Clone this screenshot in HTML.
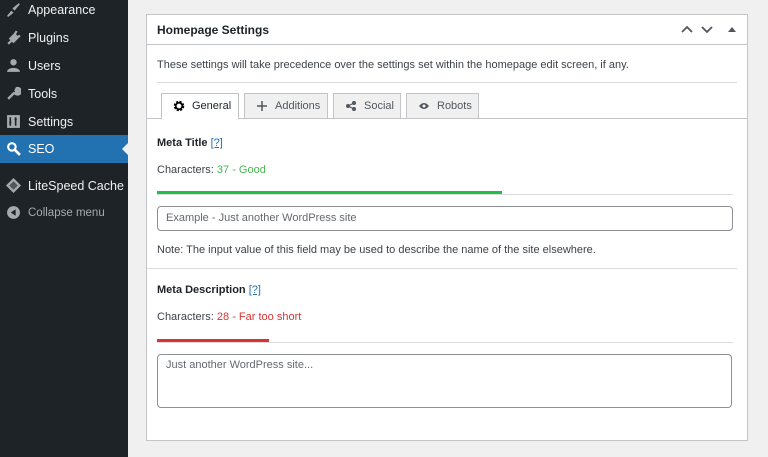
<!DOCTYPE html>
<html><head><style>
*{box-sizing:border-box;margin:0;padding:0}
body{width:768px;height:457px;overflow:hidden;background:#f0f0f1;font-family:"Liberation Sans",sans-serif;font-size:11px;color:#3c434a;position:relative}
#sb{position:absolute;left:0;top:0;width:128px;height:457px;background:#1d2327}
.mi{position:absolute;left:0;width:128px;height:28px;color:#f0f0f1;font-size:12.5px;line-height:28px;padding-left:28px}
.ic{position:absolute;left:6px;top:6px;width:15px;height:15px}
.seo{background:#2271b1;color:#fff}
.seo:after{content:"";position:absolute;right:0;top:8px;border:6px solid transparent;border-right-color:#f0f0f1}
#pn{position:absolute;left:146px;top:14px;width:602px;height:427px;background:#fff;border:1px solid #c3c4c7}
.ab{position:absolute;white-space:nowrap}
.hr{position:absolute;height:1px;background:#dcdcde}
.tab{position:absolute;top:78px;height:26px;border:1px solid #c3c4c7;background:#f0f0f1;line-height:24px;font-size:11px;color:#50575e;padding-left:30px}
.tab svg{position:absolute;left:11px;top:6px}
.inp{position:absolute;border:1px solid #8c8f94;border-radius:4px;background:#fff;color:#646970;font-size:11px;padding:0 8px}
</style></head><body>
<div id="sb">
<div class="mi" style="top:-4px"><svg class="ic" viewBox="0 0 14 14"><path d="M1 13l4-5 2 2-5 4zM6 6l6-5 1 1-5 6z" fill="#a7aaad"/></svg>Appearance</div>
<div class="mi" style="top:24px"><svg class="ic" viewBox="0 0 14 14"><path d="M2 13l3-3M4 8l4-4 3 3-4 4zM8 4l2-3M11 7l2-2" stroke="#a7aaad" stroke-width="2" fill="#a7aaad"/></svg>Plugins</div>
<div class="mi" style="top:52px"><svg class="ic" viewBox="0 0 14 14"><circle cx="7" cy="4" r="3" fill="#a7aaad"/><path d="M1 13c0-5 12-5 12 0z" fill="#a7aaad"/></svg>Users</div>
<div class="mi" style="top:80px"><svg class="ic" viewBox="0 0 14 14"><path d="M2 12l6-6M8 6a3 3 0 1 0 2-4l-1 2 1 1 2-1a3 3 0 0 1-4 2" stroke="#a7aaad" stroke-width="2.2" fill="none"/></svg>Tools</div>
<div class="mi" style="top:108px"><svg class="ic" viewBox="0 0 14 14"><rect x="1" y="1" width="12" height="12" fill="#a7aaad"/><path d="M4 3v8M9 3v8M3 8h2M8 5h2" stroke="#1d2327" stroke-width="1.5"/></svg>Settings</div>
<div class="mi seo" style="top:135px"><svg class="ic" viewBox="0 0 14 14"><circle cx="5.5" cy="5.5" r="3.5" stroke="#fff" stroke-width="2" fill="none"/><path d="M8 8l5 5" stroke="#fff" stroke-width="2.5"/></svg>SEO</div>
<div class="mi" style="top:172px"><svg class="ic" viewBox="0 0 14 14"><path d="M7 0l7 7-7 7-7-7z" fill="#a7aaad"/><path d="M7 3l4 4-4 4-4-4z" fill="#50575e"/></svg>LiteSpeed Cache</div>
<div class="mi" style="top:199px;color:#a7aaad;font-size:11.5px"><svg class="ic" viewBox="0 0 14 14"><circle cx="7" cy="7" r="6" fill="#a7aaad"/><path d="M9 4v6L4.5 7z" fill="#1d2327"/></svg>Collapse menu</div>
</div>
<div id="pn">
<div class="ab" style="left:10px;top:8px;font-size:12px;font-weight:bold;color:#1d2327">Homepage Settings</div>
<svg class="ab" style="left:533px;top:9px" width="60" height="12"><path d="M2 8l5-5 5 5M22 3l5 5 5-5" stroke="#50575e" stroke-width="1.8" fill="none"/><path d="M48 8l4-5 4 5z" fill="#50575e"/></svg>
<div class="hr" style="left:0;top:29px;width:600px;background:#c3c4c7"></div>
<div class="ab" style="left:10px;top:44px">These settings will take precedence over the settings set within the homepage edit screen, if any.</div>
<div class="hr" style="left:10px;top:67px;width:580px"></div>
<div class="hr" style="left:0;top:103px;width:600px;background:#c3c4c7"></div>
<div class="tab" style="left:14px;width:78px;background:#fff;border-bottom-color:#fff;height:27px;color:#1d2327"><svg width="12" height="12" viewBox="0 0 12 12"><circle cx="6" cy="6" r="4" fill="none" stroke="#000" stroke-width="2.5" stroke-dasharray="2 1.2"/><circle cx="6" cy="6" r="3.2" fill="none" stroke="#000" stroke-width="1.6"/></svg>General</div>
<div class="tab" style="left:97px;width:84px"><svg width="12" height="12"><path d="M6 1v10M1 6h10" stroke="#50575e" stroke-width="1.5"/></svg>Additions</div>
<div class="tab" style="left:186px;width:68px"><svg width="12" height="12"><path d="M3 6l6-3M3 6l6 3" stroke="#50575e"/><circle cx="3" cy="6" r="2" fill="#50575e"/><circle cx="9" cy="3" r="2" fill="#50575e"/><circle cx="9" cy="9" r="2" fill="#50575e"/></svg>Social</div>
<div class="tab" style="left:259px;width:73px"><svg width="12" height="12"><path d="M1 6q5-6 10 0q-5 6-10 0z" fill="#50575e"/><circle cx="6" cy="6" r="1.5" fill="#f0f0f1"/></svg>Robots</div>
<div class="ab" style="left:10px;top:122px;font-weight:bold;color:#1d2327">Meta Title <span style="font-weight:normal;color:#2271b1;text-decoration:underline">[?]</span></div>
<div class="ab" style="left:10px;top:149px">Characters: <span style="color:#46b450">37 - Good</span></div>
<div class="hr" style="left:10px;top:179px;width:576px"></div>
<div class="ab" style="left:10px;top:176px;width:345px;height:3px;background:#1dbf4a"></div>
<div class="inp" style="left:10px;top:191px;width:576px;height:25px;line-height:23px">Example - Just another WordPress site</div>
<div class="ab" style="left:10px;top:229px">Note: The input value of this field may be used to describe the name of the site elsewhere.</div>
<div class="hr" style="left:0;top:253px;width:590px"></div>
<div class="ab" style="left:10px;top:269px;font-weight:bold;color:#1d2327">Meta Description <span style="font-weight:normal;color:#2271b1;text-decoration:underline">[?]</span></div>
<div class="ab" style="left:10px;top:296px">Characters: <span style="color:#dc3232">28 - Far too short</span></div>
<div class="hr" style="left:10px;top:327px;width:576px"></div>
<div class="ab" style="left:10px;top:324px;width:112px;height:3px;background:#dc3232"></div>
<div class="inp" style="left:10px;top:339px;width:575px;height:54px;padding-top:4px">Just another WordPress site...</div>
</div>
</body></html>
